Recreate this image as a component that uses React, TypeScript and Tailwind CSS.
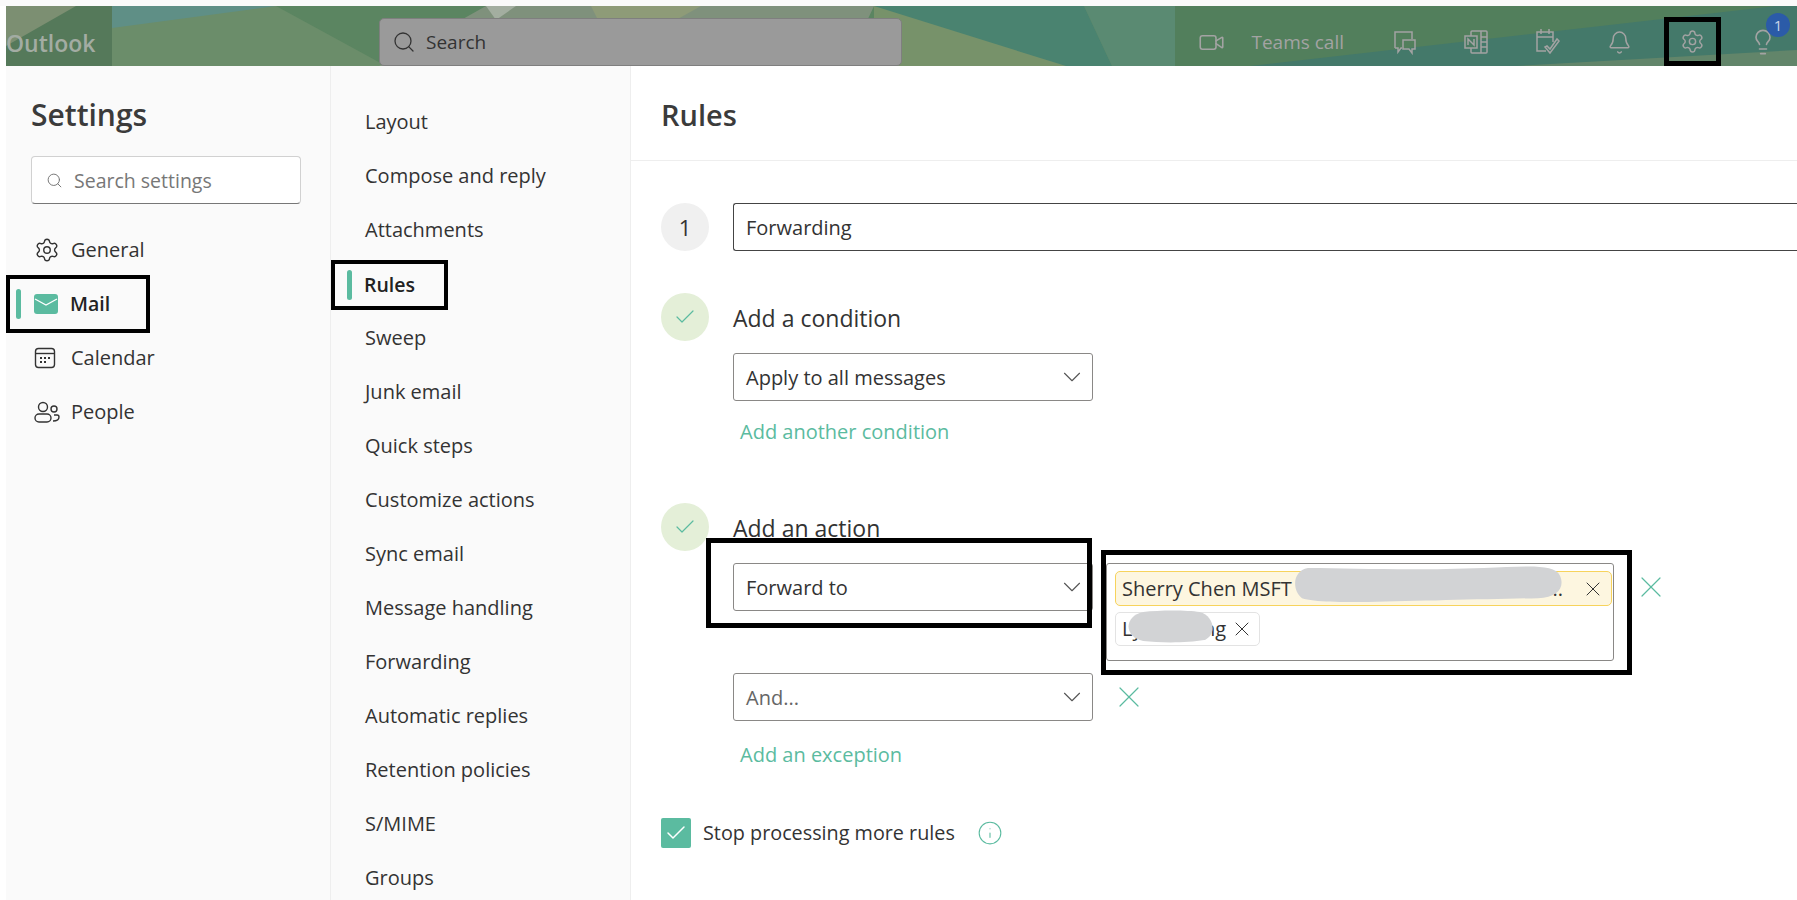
import React from 'react';
import { Bell, Check, ChevronDown, Info, Lightbulb, Search, Settings, Video, X } from 'lucide-react';

const categories = ['General', 'Mail', 'Calendar', 'People'];

const navItems = [
  'Layout', 'Compose and reply', 'Attachments', 'Rules', 'Sweep', 'Junk email', 'Quick steps',
  'Customize actions', 'Sync email', 'Message handling', 'Forwarding', 'Automatic replies',
  'Retention policies', 'S/MIME', 'Groups',
];

const HeaderBackground = () => (
  <svg className="absolute inset-0 h-full w-full" viewBox="0 0 1791 60" preserveAspectRatio="none">
    <rect width="1791" height="60" fill="#5b8561" />
    <polygon points="106,0 106,60 380,60 270,0" fill="#6b8d6a" />
    <polygon points="106,0 270,0 106,22" fill="#5f8f86" />
    <polygon points="0,0 106,0 106,60 0,60" fill="#55795a" />
    <polygon points="0,0 70,0 0,40" fill="#7c8f72" />
    <polygon points="480,0 868,0 840,60 373,60" fill="#7f917c" />
    <polygon points="480,0 510,0 490,14" fill="#a3aea0" />
    <polygon points="585,0 695,0 670,14 592,14" fill="#8e9b78" />
    <polygon points="868,0 1078,0 1106,60 868,60" fill="#4a8370" />
    <polygon points="868,0 1060,60 868,60" fill="#77926a" />
    <polygon points="1078,0 1169,0 1169,60 1106,60" fill="#5a8a72" />
    <polygon points="1169,0 1791,0 1791,60 1169,60" fill="#527f5c" />
    <polygon points="1244,60 1770,0 1791,0 1791,60" fill="#44796a" />
    <polygon points="1510,60 1791,44 1791,60" fill="#62856a" />
  </svg>
);

const ChatIcon = () => (
  <svg width="26" height="26" viewBox="0 0 26 26" fill="none" stroke="currentColor" strokeWidth="1.5">
    <path d="M4 19V3h17v7M4 19h3v4l3-4h1" />
    <path d="M12 11h12v9h-3v4l-3-4h-6z" />
  </svg>
);

const OneNoteIcon = () => (
  <svg width="26" height="26" viewBox="0 0 26 26" fill="none" stroke="currentColor" strokeWidth="1.5">
    <rect x="8" y="2" width="16" height="22" rx="1" />
    <path d="M18 2v22M18 8h6M18 13h6M18 18h6" />
    <rect x="2" y="7" width="12" height="12" fill="#4a7a62" />
    <path d="M5 16v-6l6 6v-6" />
  </svg>
);

const CalendarCheckIcon = () => (
  <svg width="26" height="28" viewBox="0 0 26 28" fill="none" stroke="currentColor" strokeWidth="1.5">
    <path d="M12 23H3V4h16v10M3 9h16M7 1v5M15 1v5" />
    <path d="M11 19l5 6 9-12-2-2-7 10-3-3z" />
  </svg>
);

const MailIcon = () => (
  <svg width="24" height="20" viewBox="0 0 24 20">
    <rect width="24" height="20" rx="3" fill="#5bbba0" />
    <path d="M1 5l11 6 11-6" fill="none" stroke="#fff" strokeWidth="1.3" />
  </svg>
);

const CalendarIcon = () => (
  <svg width="22" height="22" viewBox="0 0 22 22" fill="none" stroke="#333" strokeWidth="1.4">
    <rect x="1.5" y="1.5" width="19" height="19" rx="3" />
    <path d="M1.5 6.5h19" />
    <g fill="#333" stroke="none">
      <rect x="6" y="10" width="2" height="2" />
      <rect x="10" y="10" width="2" height="2" />
      <rect x="14" y="10" width="2" height="2" />
      <rect x="6" y="14" width="2" height="2" />
      <rect x="10" y="14" width="2" height="2" />
    </g>
  </svg>
);

const PeopleIcon = () => (
  <svg width="26" height="22" viewBox="0 0 26 22" fill="none" stroke="#333" strokeWidth="1.4">
    <circle cx="9" cy="6" r="4.5" />
    <rect x="1" y="13" width="16" height="8" rx="4" />
    <circle cx="20" cy="8" r="3" />
    <path d="M20 14h3a2 2 0 0 1 2 2c0 3-3 4-6 4" />
  </svg>
);

const categoryIcon = (name: string) => {
  if (name === 'General') return <Settings size={26} strokeWidth={1.3} color="#333" />;
  if (name === 'Mail') return <MailIcon />;
  if (name === 'Calendar') return <CalendarIcon />;
  return <PeopleIcon />;
};

const StepCircle = ({ done, label }: { done?: boolean; label?: string }) => (
  <div className={`flex h-12 w-12 shrink-0 items-center justify-center rounded-full text-[22px] text-[#333] ${done ? 'bg-[#e4efd8]' : 'bg-[#f0f0f0]'}`}>
    {done ? <Check size={24} strokeWidth={1.2} color="#5bbba0" /> : label}
  </div>
);

const SelectBox = ({ label, muted }: { label: string; muted?: boolean }) => (
  <div className="flex h-12 w-[360px] shrink-0 items-center justify-between rounded-[3px] border border-[#8a8886] pl-[12px] pr-[5px]">
    <span className={`pt-[1px] ${muted ? 'text-[#666]' : 'text-[#333]'}`}>{label}</span>
    <ChevronDown size={30} strokeWidth={0.9} color="#555" />
  </div>
);

const App: React.FC = () => {
  return (
    <div className="flex h-[900px] w-[1797px] flex-col overflow-hidden bg-white font-['Open_Sans',sans-serif] text-[20px] text-[#333]">
      <div className="h-[6px] shrink-0 bg-[#fafafa]" />

      {/* Top bar */}
      <div className="relative ml-[6px] flex h-[60px] shrink-0 items-center">
        <HeaderBackground />
        <span className="relative w-[373px] pt-[14px] text-[23px] font-semibold leading-none text-[#a3aca3]">Outlook</span>
        <div className="relative mt-[11px] flex h-[48px] w-[523px] items-center gap-[10px] rounded-[5px] border border-[#7f7f7f] bg-[#9a9a9a] pl-[12px] text-[#333]">
          <Search size={24} strokeWidth={1.3} />
          <span className="pt-[2px] text-[19px]">Search</span>
        </div>
        <div className="relative ml-auto flex h-full items-center pt-[12px] text-[#a3a3a3]">
          <Video size={27} strokeWidth={1.4} className="mr-[26px]" />
          <span className="mr-[47px] text-[19px]">Teams call</span>
          <div className="mr-[46px]"><ChatIcon /></div>
          <div className="mr-[45px]"><OneNoteIcon /></div>
          <div className="mr-[47px]"><CalendarCheckIcon /></div>
          <Bell size={25} strokeWidth={1.4} className="mr-[32px]" />
          <div className="relative mr-[28px] flex h-[49px] w-[57px] items-center justify-center self-end border-[5px] border-black">
            <Settings size={25} strokeWidth={1.4} />
          </div>
          <div className="relative mr-[20px]">
            <Lightbulb size={28} strokeWidth={1.4} />
            <span className="absolute -right-[13px] -top-[15px] flex h-6 w-6 items-center justify-center rounded-full bg-[#2b5ba8] text-[15px] text-[#c9d5e8]">1</span>
          </div>
        </div>
      </div>

      <div className="ml-[6px] flex min-h-0 flex-1">
        {/* Settings categories */}
        <aside className="w-[325px] shrink-0 border-r border-[#eeeeee] bg-[#fafafa]">
          <h1 className="mt-[29px] pl-[25px] text-[30px] font-semibold leading-[40px] text-[#3b3b3b]">Settings</h1>
          <div className="ml-[25px] mt-[21px] flex h-12 w-[270px] items-center gap-[11px] rounded-[4px] border border-[#d1d1d1] border-b-[#777] bg-white pl-[14px] text-[19.5px] text-[#777]">
            <Search size={17} strokeWidth={1.4} />
            <span className="pt-[2px]">Search settings</span>
          </div>
          <nav className="mt-[21px] flex flex-col">
            {categories.map((name) =>
              name === 'Mail' ? (
                <div key={name} className="mb-[-2px] flex h-[58px] w-[144px] items-center border-[4px] border-black pl-[6px] text-[19.5px] font-semibold text-[#222]">
                  <span className="h-[30px] w-[5px] rounded-full bg-[#5bbba0]" />
                  <span className="ml-[13px] flex w-[36px] justify-start"><MailIcon /></span>
                  <span>Mail</span>
                </div>
              ) : (
                <div key={name} className={`flex items-center pl-[28px] ${name === 'General' ? 'h-[50px]' : 'h-[54px]'}`}>
                  <span className="flex w-[37px] justify-start">{categoryIcon(name)}</span>
                  <span>{name}</span>
                </div>
              ),
            )}
          </nav>
        </aside>

        {/* Mail sub pages */}
        <nav className="w-[300px] shrink-0 border-r border-[#eeeeee] bg-[#fafafa] pt-[29px]">
          {navItems.map((item) =>
            item === 'Rules' ? (
              <div key={item} className="mb-[1px] mt-[3px] flex h-[50px] w-[117px] items-center border-[4px] border-black pl-[12px] text-[19.5px] font-semibold text-[#222]">
                <span className="h-[30px] w-[5px] rounded-full bg-[#5bbba0]" />
                <span className="ml-[12px]">{item}</span>
              </div>
            ) : (
              <div key={item} className="flex h-[54px] items-center pl-[34px]">{item}</div>
            ),
          )}
        </nav>

        {/* Rule editor */}
        <main className="relative min-w-0 flex-1 bg-white">
          <div className="flex h-[95px] items-center border-b border-[#eeeeee] pl-[30px] pt-[4px]">
            <h2 className="text-[29px] font-semibold text-[#3b3b3b]">Rules</h2>
          </div>

          <div className="pl-[30px] pt-[42px]">
            <div className="flex gap-[24px]">
              <StepCircle label="1" />
              <div className="flex h-12 flex-1 items-center rounded-l-[3px] border border-r-0 border-[#444] pl-[12px] pt-[2px]">Forwarding</div>
            </div>

            <div className="mt-[42px] flex gap-[24px]">
              <StepCircle done />
              <div className="pt-[9px] text-[23px] leading-[32px]">Add a condition</div>
            </div>
            <div className="ml-[72px] mt-[12px]"><SelectBox label="Apply to all messages" /></div>
            <div className="ml-[79px] mt-[16px] leading-[30px] text-[#5bbba0]">Add another condition</div>

            <div className="mt-[56px] flex gap-[24px]">
              <StepCircle done />
              <div className="pt-[9px] text-[23px] leading-[32px]">Add an action</div>
            </div>

            <div className="ml-[72px] mt-[12px] flex items-start">
              <div className="relative">
                <SelectBox label="Forward to" />
                <div className="pointer-events-none absolute -left-[27px] -top-[25px] h-[90px] w-[386px] border-[5px] border-black" />
              </div>
              <div className="relative ml-[13px] h-[98px] w-[508px] rounded-[3px] border border-[#8a8886] pl-[8px] pt-[7px]">
                <div className="flex h-[35px] w-[497px] items-center justify-between rounded-[5px] border border-[#f7d35c] bg-[#fdf6e0] pl-[6px] pr-[6px]">
                  <span className="flex flex-1 justify-between pr-[18px]"><span>Sherry Chen MSFT</span><span>..</span></span>
                  <X size={24} strokeWidth={1} />
                </div>
                <div className="mt-[6px] flex h-[34px] w-[145px] items-center justify-between rounded-[5px] border border-[#e3e3e3] pl-[6px] pr-[5px]">
                  <span>Ly</span>
                  <span className="ml-auto mr-[4px]">ng</span>
                  <X size={24} strokeWidth={1} />
                </div>
                {/* scribbled out parts of the addresses */}
                <svg className="absolute left-[187px] top-[1px]" width="270" height="38" viewBox="0 0 270 39" preserveAspectRatio="none">
                  <path d="M14 3C60 3 110 6 190 3c40-1 70-5 76 8 5 12-2 22-22 23-50 1-120 3-170 4C50 38 20 38 8 34-2 26-2 6 14 3z" fill="#d2d3d5" />
                </svg>
                <svg className="absolute left-[21px] top-[46px]" width="88" height="33" viewBox="0 0 81 33" preserveAspectRatio="none">
                  <path d="M14 2c15-2 40-2 52 0 14 4 16 24 4 28-15 3-40 3-56 1C-4 27-4 6 14 2z" fill="#d2d3d5" />
                </svg>
                <div className="pointer-events-none absolute -left-[6px] -top-[14px] h-[125px] w-[531px] border-[5px] border-black" />
              </div>
              <X size={36} strokeWidth={0.8} color="#5bbba0" className="ml-[19px] mt-[6px]" />
            </div>

            <div className="ml-[72px] mt-[12px] flex items-center">
              <SelectBox label="And..." muted />
              <X size={36} strokeWidth={0.8} color="#5bbba0" className="ml-[18px]" />
            </div>
            <div className="ml-[79px] mt-[19px] leading-[30px] text-[#5bbba0]">Add an exception</div>

            <div className="mt-[48px] flex items-center">
              <div className="flex h-[30px] w-[30px] items-center justify-center rounded-[2px] bg-[#5bbba0]">
                <Check size={24} strokeWidth={1.5} color="#fff" />
              </div>
              <span className="ml-[12px] text-[19.8px]">Stop processing more rules</span>
              <Info size={26} strokeWidth={1} color="#5bbba0" className="ml-[22px]" />
            </div>
          </div>
        </main>
      </div>
    </div>
  );
};

export default App;
